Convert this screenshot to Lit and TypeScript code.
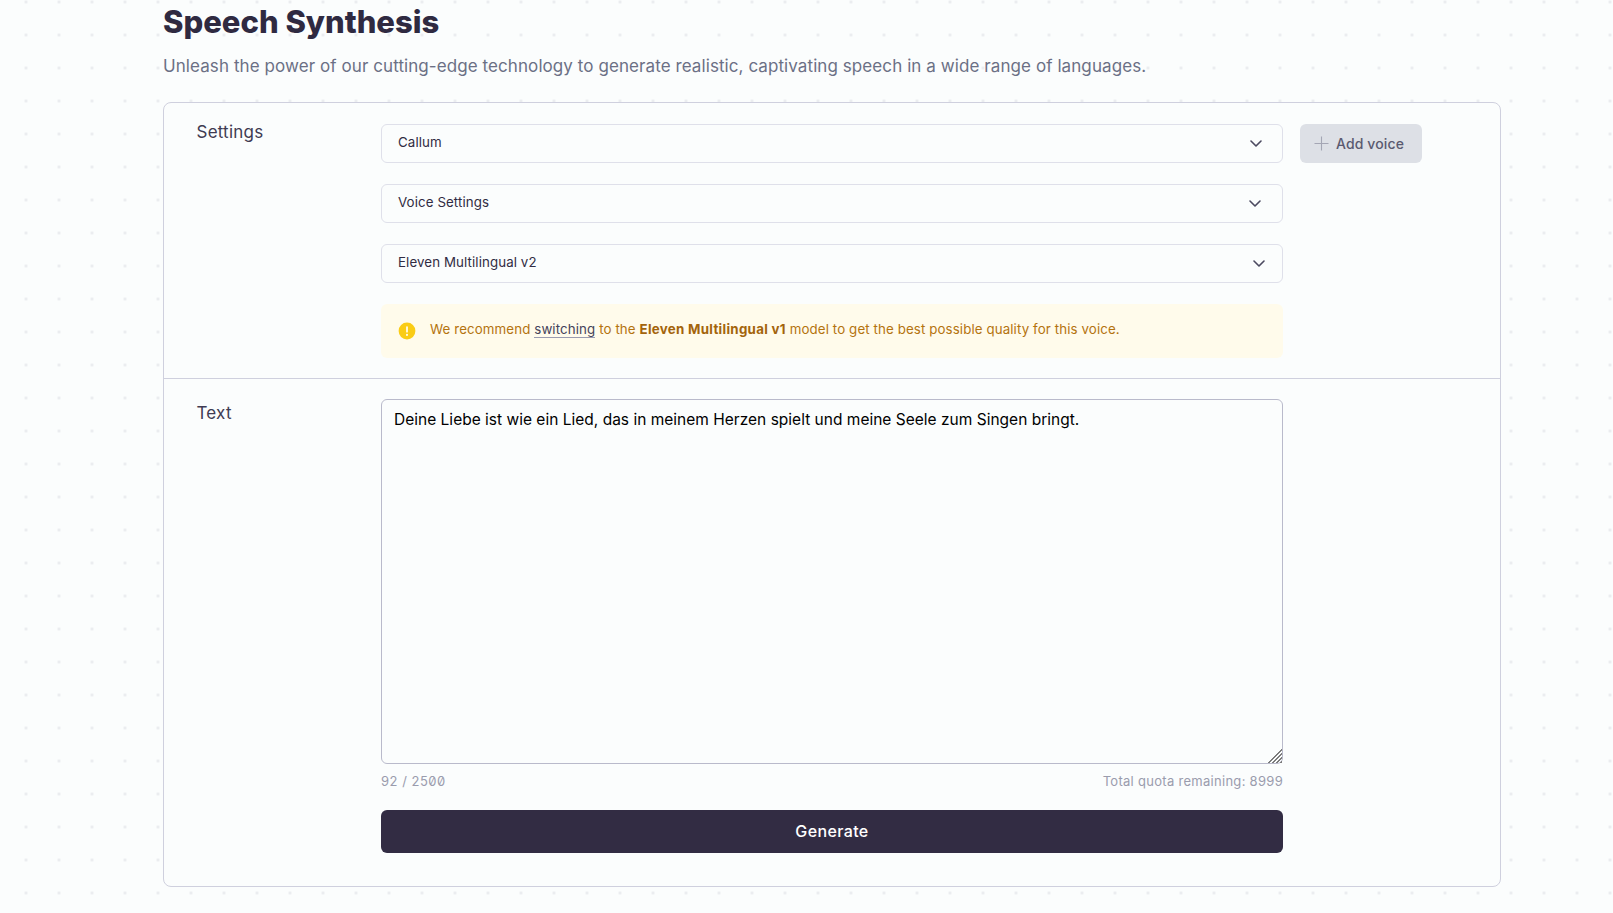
import { LitElement, html, css, svg } from "lit";
import { customElement } from "lit/decorators.js";

const chevron = svg`<path d="M1 1l5 5 5-5" fill="none" stroke="#4b4a60" stroke-width="1.6" stroke-linecap="round" stroke-linejoin="round"/>`;

@customElement("app-root")
export class AppRoot extends LitElement {
  static styles = css`
    :host {
      display: block;
      height: 913px;
      overflow: hidden;
      box-sizing: border-box;
      font-family: Inter, "Liberation Sans", sans-serif;
      font-optical-sizing: none;
      color: #312c43;
      background-color: #fbfdfd;
      background-image: radial-gradient(circle at center, #e9ebef 1.3px, transparent 1.6px);
      background-size: 33px 33px;
      background-position: 9.5px -14.5px;
    }
    * { box-sizing: border-box; }
    .wrap { width: 1338px; margin-left: 163px; }
    h1 {
      margin: 0;
      height: 44px;
      padding-top: 2px;
      font-size: 31px;
      line-height: 40px;
      font-weight: 800;
      color: #2f2a41;
    }
    .sub {
      margin: 8px 0 0;
      font-size: 17px;
      letter-spacing: 0.08px;
      line-height: 28px;
      color: #6b7085;
      height: 50px;
    }
    .panel {
      height: 785px;
      border: 1px solid #cfd0de;
      border-radius: 8px;
      background: #fbfdfd;
    }
    .row { display: grid; grid-template-columns: 217px 902px auto; }
    .row.settings { padding-top: 21px; height: 276px; border-bottom: 1px solid #cfd0de; }
    .row.text { padding-top: 20px; }
    .label { padding-left: 32.5px; font-size: 17px; letter-spacing: 0.22px; line-height: 28px; color: #3f3b52; }
    .settings .label { margin-top: -6px; }
    .text .label { margin-top: 0; }
    .fields { display: flex; flex-direction: column; gap: 21px; }
    .select {
      height: 39px;
      border: 1px solid #dfe0ea;
      border-radius: 6px;
      padding: 0 0 3px 16px;
      display: flex;
      align-items: center;
      justify-content: space-between;
      font-size: 13.3px;
      letter-spacing: 0.1px;
      color: #312c43;
    }
    .select svg { width: 12px; height: 7px; flex: none; margin-right: var(--chev); margin-top: 3px; }
    .add {
      margin-left: 17px;
      width: 122px;
      height: 39px;
      border-radius: 6px;
      background: #dde0e6;
      display: flex;
      align-items: center;
      padding-left: 14px;
      gap: 7px;
      font-size: 14px;
      letter-spacing: 0.12px;
      font-weight: 500;
      color: #5a5a70;
    }
    .add svg { width: 15px; height: 15px; flex: none; }
    .alert {
      height: 54px;
      border-radius: 6px;
      background: #fffbeb;
      display: flex;
      align-items: center;
      padding: 0 0 5px 17px;
      gap: 14px;
      font-size: 13.3px;
      letter-spacing: 0.11px;
      color: #b4730f;
    }
    .alert svg { width: 18px; height: 18px; flex: none; margin-top: 5px; }
    .alert b { font-weight: 700; letter-spacing: 0.3px; color: #a3640c; }
    .alert u {
      text-decoration: none;
      color: #45435a;
      border-bottom: 1px solid #9a9bb0;
    }
    textarea {
      display: block;
      width: 902px;
      height: 365px;
      margin: 0;
      padding: 8px 12px;
      border: 1px solid #b9bacb;
      border-radius: 6px;
      background: #fbfdfd;
      resize: vertical;
      outline: none;
      font-family: inherit;
      font-optical-sizing: none;
      font-size: 15.5px;
      letter-spacing: 0.01px;
      line-height: 24px;
      color: #000;
    }
    textarea::-webkit-resizer {
      background:
        linear-gradient(135deg, #fbfdfd 46%, transparent 46%),
        repeating-linear-gradient(135deg, #7c7c7c 0 1.4px, transparent 1.4px 2.8px);
    }
    .meta {
      display: flex;
      justify-content: space-between;
      margin-top: 7px;
      height: 20px;
      font-size: 13px;
      letter-spacing: 0.29px;
      line-height: 20px;
      color: #9a9cad;
    }
    .count { font-feature-settings: "zero"; letter-spacing: 0.5px; }
    .generate {
      display: block;
      width: 902px;
      height: 43px;
      margin-top: 19px;
      padding: 0 0 2px;
      border: 0;
      border-radius: 6px;
      background: #322c43;
      color: #fff;
      font-family: inherit;
      font-optical-sizing: none;
      font-size: 16px;
      letter-spacing: 0.38px;
      font-weight: 500;
    }
  `;

  private sel(text: string, right: number) {
    return html`<div class="select" style="--chev:${right}px">
      <span>${text}</span><svg viewBox="0 0 12 7">${chevron}</svg>
    </div>`;
  }

  render() {
    return html`<div class="wrap">
      <h1>Speech Synthesis</h1>
      <p class="sub">Unleash the power of our cutting-edge technology to generate realistic, captivating speech in a wide range of languages.</p>
      <section class="panel">
        <div class="row settings">
          <div class="label">Settings</div>
          <div class="fields">
            ${this.sel("Callum", 20)}
            ${this.sel("Voice Settings", 21)}
            ${this.sel("Eleven Multilingual v2", 17)}
            <div class="alert">
              <svg viewBox="0 0 18 18">
                <circle cx="9" cy="9" r="8.4" fill="#facc15"/>
                <rect x="8.1" y="4.2" width="1.8" height="6.4" rx="0.9" fill="#fffbeb"/>
                <circle cx="9" cy="12.9" r="1.05" fill="#fffbeb"/>
              </svg>
              <span>We recommend <u>switching</u> to the <b>Eleven Multilingual v1</b> model to get the best possible quality for this voice.</span>
            </div>
          </div>
          <div>
            <div class="add">
              <svg viewBox="0 0 15 15"><path d="M7.5 0.5v14M0.5 7.5h14" stroke="#a4a6b4" stroke-width="1.1" fill="none"/></svg>
              <span>Add voice</span>
            </div>
          </div>
        </div>
        <div class="row text">
          <div class="label">Text</div>
          <div>
            <textarea spellcheck="false">Deine Liebe ist wie ein Lied, das in meinem Herzen spielt und meine Seele zum Singen bringt.</textarea>
            <div class="meta"><span class="count">92 / 2500</span><span>Total quota remaining: 8999</span></div>
            <button class="generate">Generate</button>
          </div>
        </div>
      </section>
    </div>`;
  }
}
